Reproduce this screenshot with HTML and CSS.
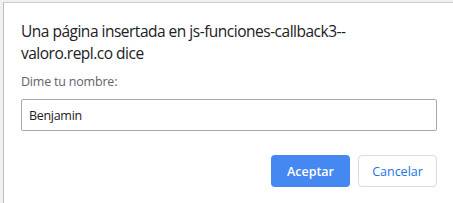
FILE: index.html
```html
<!DOCTYPE html>
<html lang="es">
<head>
    <meta charset="UTF-8">
    <meta name="viewport" content="width=device-width, initial-scale=1.0">
    <title>Prompt</title>
    <link rel="stylesheet" href="styles.css">
</head>
<body>
    <div class="dialog">
        <h1 class="title">Una página insertada en js-funciones-callback3--<br>valoro.repl.co dice</h1>
        <label class="label" for="answer">Dime tu nombre:</label>
        <input class="answer" id="answer" type="text" value="Benjamin">
        <div class="actions">
            <button class="btn btn-primary">Aceptar</button>
            <button class="btn btn-secondary">Cancelar</button>
        </div>
    </div>
</body>
</html>
```

FILE: styles.css
```css
html, body {
    margin: 0;
    padding: 0;
    width: 453px;
    height: 203px;
    overflow: hidden;
}

body {
    background-color: #f0f0f0;
    font-family: "Open Sans", "Noto Sans", Arial, sans-serif;
    color: #202124;
}

.dialog {
    margin: 2px 0 0 3px;
    height: 201px;
    box-sizing: border-box;
    padding: 17px 16px 0 17px;
    background-color: #fff;
    border-top: 1px solid #cdcdcd;
    border-left: 1px solid #bdbdbd;
}

.title {
    margin: 0;
    font-size: 15.5px;
    font-weight: normal;
    line-height: 22px;
    letter-spacing: -0.5px;
    color: #202124;
}

.label {
    display: block;
    margin-top: 9px;
    font-size: 12.5px;
    line-height: 18px;
    letter-spacing: -0.2px;
    color: #5f6368;
}

.answer {
    display: block;
    box-sizing: border-box;
    width: 416px;
    height: 32px;
    margin-top: 8px;
    padding: 0 7px;
    font-family: inherit;
    font-size: 12.5px;
    letter-spacing: -0.3px;
    color: #202124;
    border: 1px solid #a9a9a9;
    border-radius: 2px;
    outline: none;
}

.actions {
    display: flex;
    justify-content: flex-end;
    gap: 8px;
    width: 416px;
    margin-top: 24px;
}

.btn {
    width: 79px;
    height: 32px;
    box-sizing: border-box;
    font-family: inherit;
    font-size: 12.5px;
    border-radius: 4px;
    cursor: pointer;
}

.btn-primary {
    background-color: #4688f1;
    color: #fff;
    font-weight: 600;
    border: none;
}

.btn-secondary {
    background-color: #fff;
    color: #1a73e8;
    border: 1px solid #dadce0;
}
```
